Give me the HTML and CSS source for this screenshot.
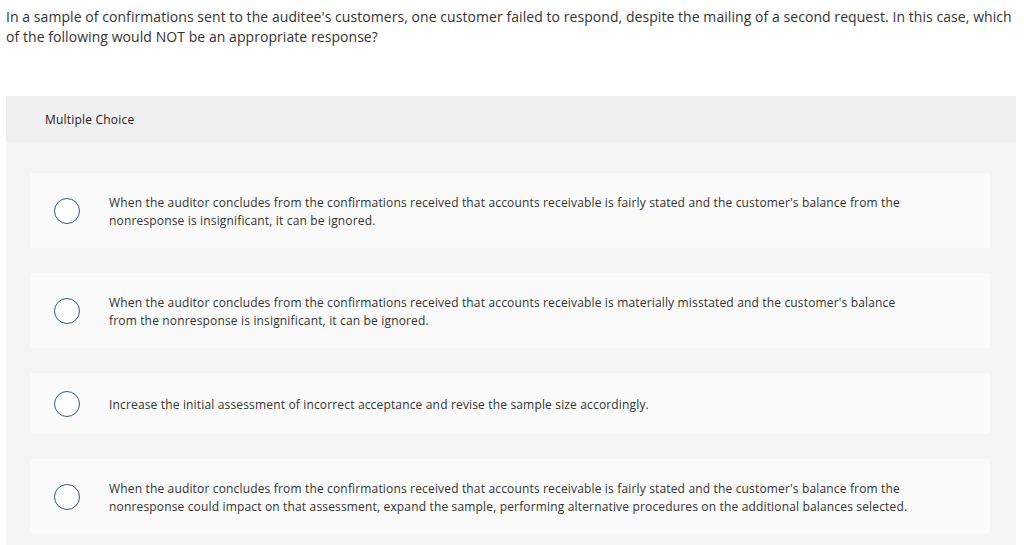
FILE: index.html
```html
<!DOCTYPE html>
<html lang="en">
<head>
<meta charset="utf-8">
<title>Multiple Choice</title>
<link rel="stylesheet" href="styles.css">
</head>
<body>
<div class="question">In a sample of confirmations sent to the auditee's customers, one customer failed to respond, despite the mailing of a second request. In this case, which of the following would NOT be an appropriate response?</div>
<section class="panel">
  <header class="panel-head">Multiple Choice</header>
  <div class="panel-body">
    <label class="option">
      <span class="radio"></span>
      <span class="option-text">When the auditor concludes from the confirmations received that accounts receivable is fairly stated and the customer's balance from the nonresponse is insignificant, it can be ignored.</span>
    </label>
    <label class="option">
      <span class="radio"></span>
      <span class="option-text">When the auditor concludes from the confirmations received that accounts receivable is materially misstated and the customer's balance from the nonresponse is insignificant, it can be ignored.</span>
    </label>
    <label class="option">
      <span class="radio"></span>
      <span class="option-text">Increase the initial assessment of incorrect acceptance and revise the sample size accordingly.</span>
    </label>
    <label class="option">
      <span class="radio"></span>
      <span class="option-text">When the auditor concludes from the confirmations received that accounts receivable is fairly stated and the customer's balance from the nonresponse could impact on that assessment, expand the sample, performing alternative procedures on the additional balances selected.</span>
    </label>
  </div>
</section>
</body>
</html>
```
FILE: styles.css
```css
html, body {
  margin: 0;
  padding: 0;
  background: #ffffff;
}
body {
  font-family: "Open Sans", Lato, "Liberation Sans", sans-serif;
  color: #333333;
  padding: 0 8px 0 6px;
  overflow: hidden;
}
.question {
  font-size: 14px;
  line-height: 20px;
  letter-spacing: 0.06px;
  padding-top: 7px;
  margin-bottom: 49px;
}
.panel {
  background: #f5f5f5;
}
.panel-head {
  background: #f0f0f0;
  height: 46px;
  display: flex;
  align-items: center;
  padding-left: 39px;
  font-size: 12px;
  letter-spacing: 0.2px;
  color: #222;
}
.panel-body {
  padding: 31px 26px 20px 24px;
  display: flex;
  flex-direction: column;
  gap: 25px;
}
.option {
  background: #fafafa;
  border-radius: 3px;
  padding: 17.5px 24px;
  display: flex;
  align-items: center;
}
.radio {
  flex: none;
  width: 24px;
  height: 24px;
  border: 1px solid #2d5b8e;
  border-radius: 50%;
  background: #ffffff;
}
.option-text {
  margin-left: 29px;
  max-width: 810px;
  font-size: 12px;
  line-height: 17.5px;
  letter-spacing: 0.16px;
  padding: 3.5px 0 1.5px;
  color: #333333;
}
```
